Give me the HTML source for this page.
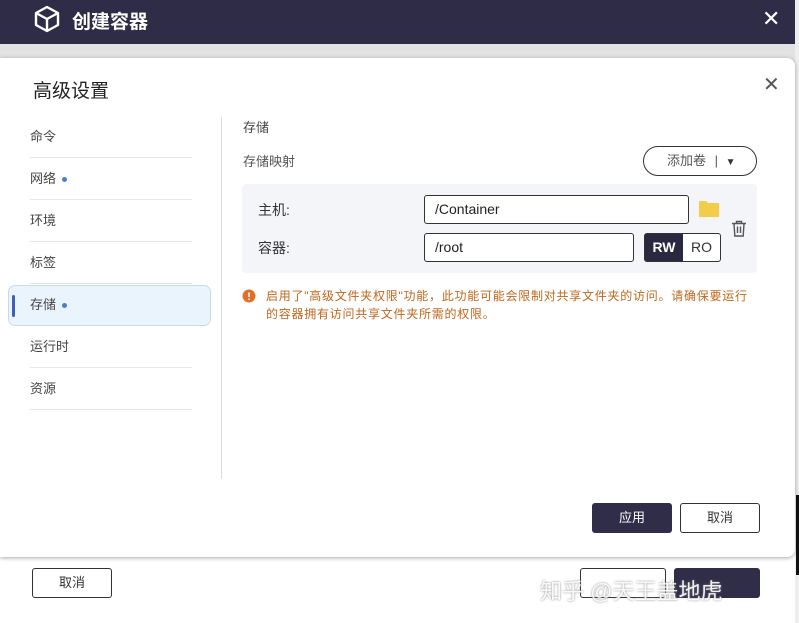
<!DOCTYPE html>
<html><head><meta charset="utf-8"><style>
*{box-sizing:border-box;margin:0;padding:0}
body{width:799px;height:623px;overflow:hidden;background:#fff;font-family:"Liberation Sans","Noto Sans CJK SC",sans-serif;position:relative;color:#333}
.abs{position:absolute}
.top{left:0;top:0;width:795px;height:44px;background:#2f2c47}
.strip{left:0;top:44px;width:795px;height:20px;background:#e2e2e2}
.dlg{left:0;top:58px;width:795px;height:499px;background:#fff;border-radius:0 8px 8px 0;box-shadow:0 1px 4px rgba(0,0,0,.35)}
.nav{font-size:13px;color:#444}
.nav div{position:absolute;left:30px;width:162px;height:42px;border-bottom:1px solid #e6e6e6;line-height:42px}
.dot{display:inline-block;width:5px;height:5px;border-radius:50%;background:#4a7fc1;margin-left:6px;vertical-align:middle}
.btn{position:absolute;border:1px solid #333;border-radius:3px;background:#fff;font-size:13px;text-align:center;color:#333}
.inp{position:absolute;border:1px solid #333;border-radius:3px;background:#fff;font-size:14px;padding-left:10px;color:#222}
</style></head><body>
<div class="abs top"></div>
<svg class="abs" style="left:33px;top:5px" width="28" height="28" viewBox="0 0 28 28" fill="none" stroke="#fff" stroke-width="2.4" stroke-linejoin="round"><path d="M14 2 L25 8 V20 L14 26 L3 20 V8 Z M3 8 L14 14 L25 8 M14 14 V26"/></svg>
<div class="abs" style="left:72px;top:7px;color:#fff;font-size:19px;font-weight:bold">创建容器</div>
<div class="abs" style="left:762px;top:6px;color:#fff;font-size:22px">✕</div>
<div class="abs strip"></div>
<div class="abs" style="left:795px;top:0;width:4px;height:623px;background:#eee"></div>
<div class="abs" style="left:796px;top:495px;width:3px;height:80px;background:#111"></div>
<div class="abs dlg"></div>
<div class="abs" style="left:33px;top:76px;font-size:19px;color:#222">高级设置</div>
<div class="abs" style="left:763px;top:72px;font-size:20px;color:#555">✕</div>
<div class="abs" style="left:221px;top:117px;width:1px;height:362px;background:#ddd"></div>
<div class="abs" style="left:8px;top:285px;width:203px;height:41px;background:#eaf4fc;border:1px solid #c8dbea;border-radius:7px"></div>
<div class="abs" style="left:12px;top:295px;width:3px;height:22px;background:#3c5fb8;border-radius:2px"></div>
<div class="nav">
<div style="top:116px">命令</div>
<div style="top:158px">网络<span class="dot"></span></div>
<div style="top:200px">环境</div>
<div style="top:242px">标签</div>
<div style="top:284px;border:none">存储<span class="dot"></span></div>
<div style="top:326px">运行时</div>
<div style="top:368px">资源</div>
</div>
<div class="abs" style="left:243px;top:117px;font-size:13px;color:#444">存储</div>
<div class="abs" style="left:243px;top:151px;font-size:13px;color:#555">存储映射</div>
<div class="abs" style="left:643px;top:146px;width:114px;height:30px;border:1px solid #333;border-radius:15px;font-size:13px;color:#555;line-height:28px;padding-left:23px">添加卷 <span style="margin-left:5px;color:#555">|</span> <span style="font-size:10px;color:#333;margin-left:4px">▼</span></div>
<div class="abs" style="left:242px;top:184px;width:515px;height:89px;background:#f4f5f8;border-radius:4px"></div>
<div class="abs" style="left:258px;top:200px;font-size:14px;color:#333">主机:</div>
<div class="abs" style="left:258px;top:238px;font-size:14px;color:#333">容器:</div>
<div class="inp" style="left:424px;top:195px;width:265px;height:29px;line-height:27px">/Container</div>
<div class="inp" style="left:424px;top:233px;width:210px;height:29px;line-height:27px">/root</div>
<div class="abs" style="left:644px;top:233px;width:77px;height:29px;border:1px solid #333;border-radius:3px;background:#fff;font-size:14px;line-height:27px"><span style="display:inline-block;width:38px;background:#2a2840;color:#fff;text-align:center;font-weight:bold">RW</span><span style="display:inline-block;width:37px;text-align:center">RO</span></div>
<svg class="abs" style="left:698px;top:200px" width="22" height="18" viewBox="0 0 22 18"><path d="M1 2 Q1 1 2 1 H8 L10 3 H20 Q21 3 21 4 V17 H1 Z" fill="#f3cc4a"/></svg>
<svg class="abs" style="left:731px;top:220px" width="16" height="17" viewBox="0 0 16 17" fill="none" stroke="#555" stroke-width="1.4"><path d="M1 3.5H15M5.5 3.5V1.5H10.5V3.5M3 3.5L3.8 16H12.2L13 3.5M6.5 6.5V13M9.5 6.5V13"/></svg>
<svg class="abs" style="left:242px;top:289px" width="14" height="14" viewBox="0 0 14 14"><circle cx="7" cy="7" r="6.5" fill="#e0712a"/><path d="M7 3.5V8M7 9.5V10.8" stroke="#fff" stroke-width="1.6"/></svg>
<div class="abs" style="left:266px;top:287px;width:500px;font-size:12px;line-height:18px;color:#c0671c;white-space:nowrap;letter-spacing:0.75px">启用了"高级文件夹权限"功能，此功能可能会限制对共享文件夹的访问。请确保要运行<br>的容器拥有访问共享文件夹所需的权限。</div>
<div class="btn" style="left:592px;top:503px;width:80px;height:30px;line-height:28px;background:#302d48;border-color:#302d48;color:#fff">应用</div>
<div class="btn" style="left:680px;top:503px;width:80px;height:30px;line-height:28px">取消</div>
<div class="btn" style="left:32px;top:568px;width:80px;height:30px;line-height:28px">取消</div>
<div class="btn" style="left:580px;top:568px;width:86px;height:30px"></div>
<div class="btn" style="left:674px;top:568px;width:86px;height:30px;background:#302d48;border-color:#302d48"></div>
<div class="abs" style="left:540px;top:574px;font-size:22px;color:rgba(255,255,255,.9);text-shadow:0 0 2px #888">知乎 @天王盖地虎</div>
</body></html>
